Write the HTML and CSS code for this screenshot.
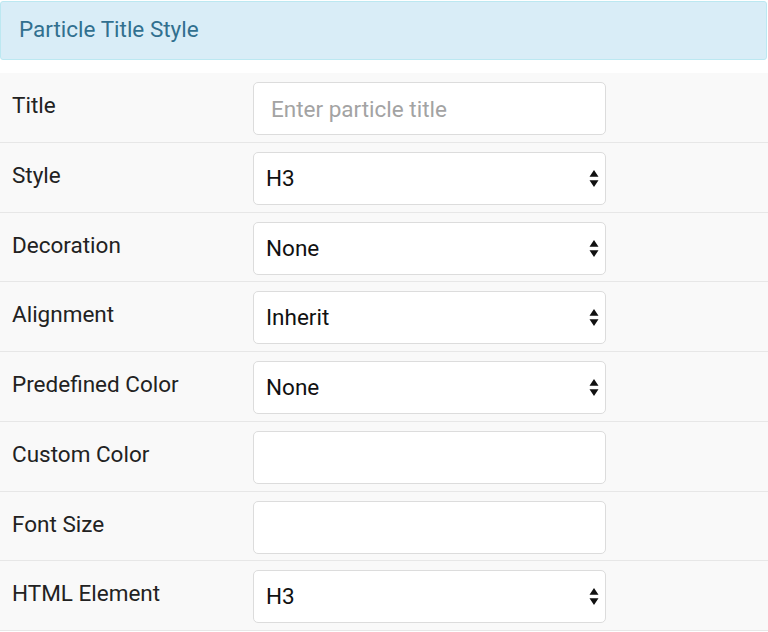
FILE: index.html
```html
<!DOCTYPE html>
<html>
<head>
<meta charset="utf-8">
<link rel="stylesheet" href="styles.css">
</head>
<body>
<div class="page">
  <div class="panel-heading">Particle Title Style</div>
  <div class="rows">
    <div class="row">
      <div class="label">Title</div>
      <div class="control"><input class="field" type="text" placeholder="Enter particle title"></div>
    </div>
    <div class="row">
      <div class="label">Style</div>
      <div class="control select-wrap"><div class="field sel">H3</div><svg class="arrows" width="10" height="19" viewBox="0 0 10 19"><path d="M5 1 L9.5 7.8 L0.5 7.8 Z M0.5 11.2 L9.5 11.2 L5 18 Z" fill="#111"/></svg></div>
    </div>
    <div class="row">
      <div class="label">Decoration</div>
      <div class="control select-wrap"><div class="field sel">None</div><svg class="arrows" width="10" height="19" viewBox="0 0 10 19"><path d="M5 1 L9.5 7.8 L0.5 7.8 Z M0.5 11.2 L9.5 11.2 L5 18 Z" fill="#111"/></svg></div>
    </div>
    <div class="row">
      <div class="label">Alignment</div>
      <div class="control select-wrap"><div class="field sel">Inherit</div><svg class="arrows" width="10" height="19" viewBox="0 0 10 19"><path d="M5 1 L9.5 7.8 L0.5 7.8 Z M0.5 11.2 L9.5 11.2 L5 18 Z" fill="#111"/></svg></div>
    </div>
    <div class="row">
      <div class="label">Predefined Color</div>
      <div class="control select-wrap"><div class="field sel">None</div><svg class="arrows" width="10" height="19" viewBox="0 0 10 19"><path d="M5 1 L9.5 7.8 L0.5 7.8 Z M0.5 11.2 L9.5 11.2 L5 18 Z" fill="#111"/></svg></div>
    </div>
    <div class="row">
      <div class="label">Custom Color</div>
      <div class="control"><input class="field" type="text"></div>
    </div>
    <div class="row">
      <div class="label">Font Size</div>
      <div class="control"><input class="field" type="text"></div>
    </div>
    <div class="row">
      <div class="label">HTML Element</div>
      <div class="control select-wrap"><div class="field sel">H3</div><svg class="arrows" width="10" height="19" viewBox="0 0 10 19"><path d="M5 1 L9.5 7.8 L0.5 7.8 Z M0.5 11.2 L9.5 11.2 L5 18 Z" fill="#111"/></svg></div>
    </div>
  </div>
</div>
</body>
</html>
```
FILE: styles.css
```css
html, body {
  margin: 0;
  padding: 0;
  background: #ffffff;
  overflow: hidden;
}
body {
  font-family: Roboto, "Liberation Sans", sans-serif;
  color: #222222;
}
.page {
  width: 768px;
  height: 632px;
  padding-top: 1px;
  box-sizing: border-box;
}
.panel-heading {
  box-sizing: border-box;
  width: 767px;
  height: 59px;
  background: #d9edf7;
  border: 1px solid #bce8f1;
  border-radius: 3px;
  color: #31708f;
  font-size: 22.5px;
  line-height: 22px;
  padding: 16px 0 0 18px;
}
.rows {
  margin-top: 13px;
}
.row {
  box-sizing: border-box;
  height: 69.75px;
  background: #f9f9f9;
  border-bottom: 1px solid #e7e7e7;
  display: flex;
  align-items: flex-start;
}
.label {
  width: 253px;
  padding: 19px 0 0 12px;
  box-sizing: border-box;
  font-size: 22.5px;
  line-height: 26px;
  color: #222;
}
.control {
  width: 353px;
  padding-top: 9px;
  position: relative;
}
.field {
  box-sizing: border-box;
  width: 353px;
  height: 53px;
  border: 1px solid #dcdcdc;
  border-radius: 5px;
  background: #ffffff;
  font-family: Roboto, "Liberation Sans", sans-serif;
  font-size: 22.5px;
  color: #111;
  padding: 0 0 0 17px;
  margin: 0;
  outline: none;
  display: block;
}
.field::placeholder {
  color: #a3a3a3;
}
.sel {
  padding-left: 12px;
  line-height: 51px;
}
.arrows {
  position: absolute;
  left: 336px;
  top: 26px;
}
```
